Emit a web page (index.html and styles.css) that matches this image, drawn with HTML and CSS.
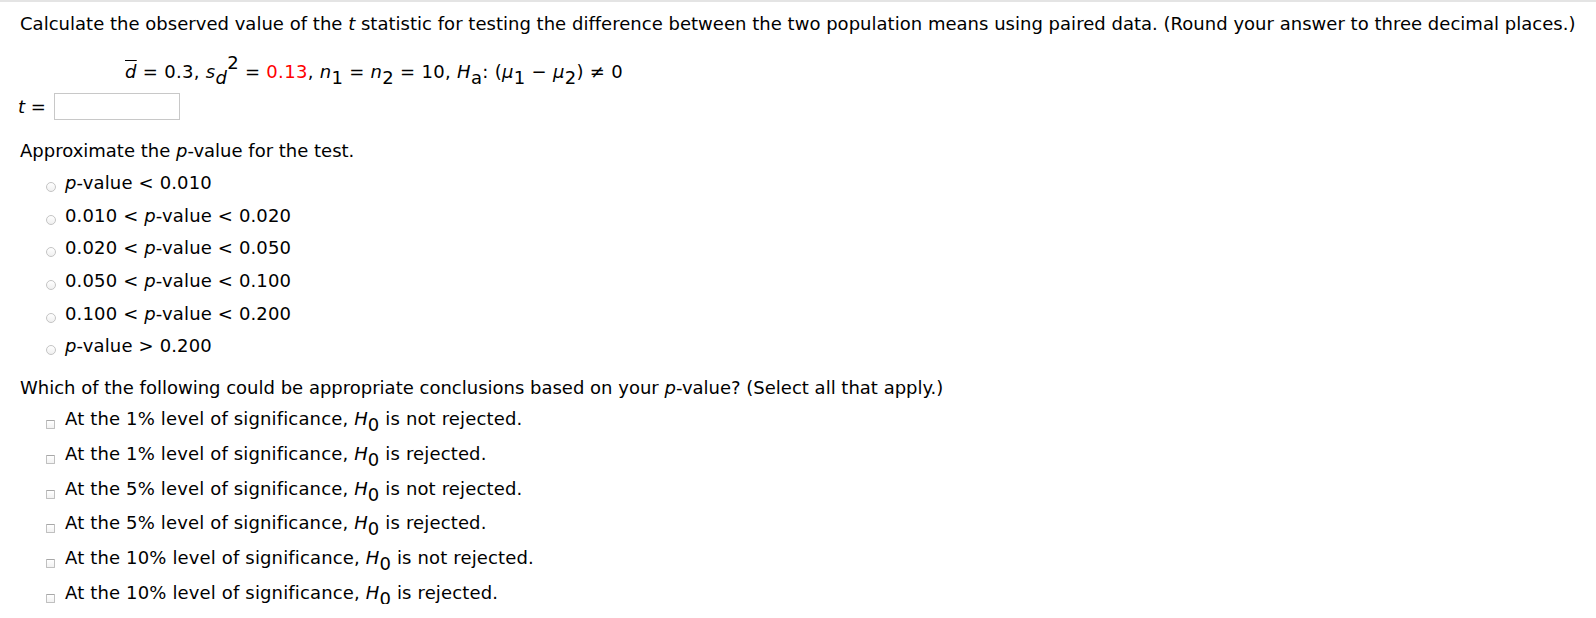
FILE: index.html
```
<!DOCTYPE html>
<html>
<head>
<meta charset="utf-8">
<link rel="stylesheet" href="styles.css">
</head>
<body>
<div class="topbar"></div>
<div class="question">
  <p class="line first">Calculate the observed value of the <i>t</i> statistic for testing the difference between the two population means using paired data. (Round your answer to three decimal places.)</p>
  <div class="line formula"><i class="bar">d</i> = 0.3, <i>s</i><sub><i>d</i></sub><sup>2</sup> = <span class="red">0.13</span>, <i>n</i><sub>1</sub> = <i>n</i><sub>2</sub> = 10, <i>H</i><sub>a</sub>: (<i>μ</i><sub>1</sub> − <i>μ</i><sub>2</sub>) ≠ 0</div>
  <div class="answer"><span class="label"><i>t</i> =</span><span class="box"></span></div>
  <p class="line section">Approximate the <i>p</i>-value for the test.</p>
  <ul class="opts radios">
    <li><span class="radio"></span><span><i>p</i>-value &lt; 0.010</span></li>
    <li><span class="radio"></span><span>0.010 &lt; <i>p</i>-value &lt; 0.020</span></li>
    <li><span class="radio"></span><span>0.020 &lt; <i>p</i>-value &lt; 0.050</span></li>
    <li><span class="radio"></span><span>0.050 &lt; <i>p</i>-value &lt; 0.100</span></li>
    <li><span class="radio"></span><span>0.100 &lt; <i>p</i>-value &lt; 0.200</span></li>
    <li><span class="radio"></span><span><i>p</i>-value &gt; 0.200</span></li>
  </ul>
  <p class="line section2">Which of the following could be appropriate conclusions based on your <i>p</i>-value? (Select all that apply.)</p>
  <ul class="opts checks">
    <li><span class="check"></span><span>At the 1% level of significance, <i>H</i><sub>0</sub> is not rejected.</span></li>
    <li><span class="check"></span><span>At the 1% level of significance, <i>H</i><sub>0</sub> is rejected.</span></li>
    <li><span class="check"></span><span>At the 5% level of significance, <i>H</i><sub>0</sub> is not rejected.</span></li>
    <li><span class="check"></span><span>At the 5% level of significance, <i>H</i><sub>0</sub> is rejected.</span></li>
    <li><span class="check"></span><span>At the 10% level of significance, <i>H</i><sub>0</sub> is not rejected.</span></li>
    <li><span class="check"></span><span>At the 10% level of significance, <i>H</i><sub>0</sub> is rejected.</span></li>
  </ul>
</div>
</body>
</html>
```

FILE: styles.css
```
html, body {
  margin: 0;
  padding: 0;
  background: #ffffff;
}
body {
  font-family: "DejaVu Sans", Verdana, sans-serif;
  font-size: 18px;
  color: #000000;
  overflow: hidden;
}
.topbar {
  height: 2px;
  background: #e4e4e4;
}
.question {
  padding-left: 20px;
}
.line {
  margin: 0;
  line-height: 22px;
  white-space: nowrap;
}
.first {
  margin-top: 11px;
  letter-spacing: 0.02px;
}
.formula {
  margin-top: 26px;
  padding-left: 105px;
  letter-spacing: 0.3px;
}
sub, sup {
  font-size: 18px;
  line-height: 0;
  font-style: normal;
}
sub {
  vertical-align: -6px;
}
sup {
  vertical-align: 9px;
}
.bar {
  text-decoration: overline;
}
.red {
  color: #ff0000;
}
.answer {
  margin-top: 10px;
  display: flex;
  align-items: center;
  height: 27px;
}
.label {
  line-height: 22px;
  margin-left: -2px;
  width: 36px;
}
.box {
  width: 124px;
  height: 25px;
  border: 1px solid #c8c8c8;
  background: #fff;
}
.section {
  margin-top: 20px;
}
.section2 {
  margin-top: 19.5px;
}
.opts {
  list-style: none;
  margin: 0;
  padding: 0 0 0 26px;
  display: flex;
  flex-direction: column;
}
.opts li {
  display: flex;
  align-items: center;
  line-height: 22px;
  height: 22px;
  white-space: nowrap;
}
.radios {
  margin-top: 10px;
  gap: 10.7px;
  letter-spacing: 0.15px;
}
.checks {
  margin-top: 9px;
  gap: 12.8px;
  letter-spacing: 0.15px;
}
.radio {
  width: 8px;
  height: 8px;
  border: 1px solid #c4c4c4;
  border-radius: 50%;
  background: linear-gradient(#ffffff, #f0f0f0);
  margin-top: 8px;
  margin-right: 9px;
  flex: none;
}
.check {
  width: 7px;
  height: 7px;
  border: 1px solid #c0c0c0;
  border-top-color: #a8a8a8;
  border-radius: 1px;
  background: linear-gradient(#ffffff, #f2f2f2);
  margin-top: 11px;
  margin-right: 10px;
  flex: none;
}
```
